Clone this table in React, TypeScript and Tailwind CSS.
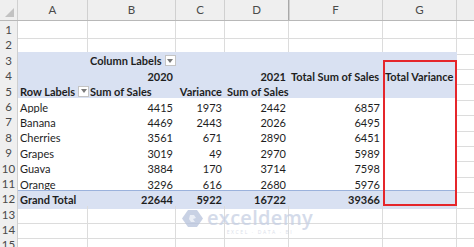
import React from 'react';

const cols = 'grid grid-cols-[18px_70px_88px_49px_64px_94px_74px_1fr]';
const font = { fontFamily: 'Lato, "Open Sans", sans-serif' };

type Row = { n: number; cells?: React.ReactNode[]; kind?: 'plain' | 'blue' | 'blueLast' | 'data' | 'total' };

const Drop = () => (
  <span className="ml-[3px] inline-flex h-[11px] w-[11px] items-center justify-center border border-[#c4c4c4] bg-white">
    <svg width="6" height="4" viewBox="0 0 6 4">
      <path d="M0 0h6L3 4z" fill="#7a7a7a" />
    </svg>
  </span>
);

const rows: Row[] = [
  { n: 1, kind: 'plain' },
  { n: 2, kind: 'plain' },
  { n: 3, kind: 'blue', cells: ['', <span className="flex items-center font-bold">Column Labels<Drop /></span>, '', '', '', ''] },
  { n: 4, kind: 'blue', cells: ['', <b className="ml-auto">2020</b>, '', <b className="ml-auto">2021</b>, <b>Total Sum of Sales</b>, <b>Total Variance</b>] },
  { n: 5, kind: 'blueLast', cells: [<span className="flex items-center font-bold">Row Labels<Drop /></span>, <b>Sum of Sales</b>, <b className="ml-auto">Variance</b>, <b className="whitespace-nowrap">Sum of Sales</b>, '', ''] },
  { n: 6, kind: 'data', cells: ['Apple', '4415', '1973', '2442', '6857', ''] },
  { n: 7, kind: 'data', cells: ['Banana', '4469', '2443', '2026', '6495', ''] },
  { n: 8, kind: 'data', cells: ['Cherries', '3561', '671', '2890', '6451', ''] },
  { n: 9, kind: 'data', cells: ['Grapes', '3019', '49', '2970', '5989', ''] },
  { n: 10, kind: 'data', cells: ['Guava', '3884', '170', '3714', '7598', ''] },
  { n: 11, kind: 'data', cells: ['Orange', '3296', '616', '2680', '5976', ''] },
  { n: 12, kind: 'total', cells: ['Grand Total', '22644', '5922', '16722', '39366', ''] },
  { n: 13, kind: 'plain' },
  { n: 14, kind: 'plain' },
  { n: 15, kind: 'plain' },
];

const letters = ['A', 'B', 'C', 'D', 'F', 'G'];

function rowClass(kind: Row['kind']) {
  if (kind === 'blue') return 'bg-[#d9e1f2]';
  if (kind === 'blueLast') return 'bg-[#d9e1f2] border-b border-[#9bb2dc]';
  if (kind === 'total') return 'bg-[#d9e1f2] border-t border-[#9bb2dc] font-bold';
  return 'bg-white';
}

export default function App() {
  return (
    <div className="relative h-[247px] w-[474px] overflow-hidden bg-white text-[11px] text-[#1e1e1e]" style={font}>
      {/* column header */}
      <div className={`${cols} h-[21px] border-b border-[#b8b8b8] bg-[#efefef] text-[11.5px] text-[#4a4a4a]`}>
        <div className="relative border-r border-[#d0d0d0]">
          <svg className="absolute bottom-[3px] right-[3px]" width="9" height="9" viewBox="0 0 9 9">
            <path d="M9 0v9H0z" fill="#c2c2c2" />
          </svg>
        </div>
        {letters.map((l, i) => (
          <div
            key={l}
            className={`flex items-center justify-center border-r ${i === 3 ? 'border-[#a8a8a8] shadow-[1px_0_0_#d0d0d0]' : 'border-[#d0d0d0]'}`}
          >
            {l}
          </div>
        ))}
        <div />
      </div>

      {rows.map((r) => {
        const pivot = r.kind !== 'plain';
        return (
          <div key={r.n} className={`${cols} h-[15.4px]`}>
            <div className="flex items-center justify-center border-r border-b border-[#cfcfcf] bg-[#efefef] text-[11.5px] text-[#4a4a4a]">
              {r.n}
            </div>
            {pivot ? (
              <div className={`col-span-6 grid grid-cols-[70px_88px_49px_64px_94px_74px] ${rowClass(r.kind)}`}>
                {r.cells!.map((c, i) => {
                  const num = r.kind === 'data' || r.kind === 'total';
                  const right = num && i > 0;
                  return (
                    <div
                      key={i}
                      className={`flex items-center overflow-visible whitespace-nowrap pl-[2px] pr-[3px] leading-none ${right ? 'justify-end' : ''}`}
                    >
                      {c}
                    </div>
                  );
                })}
              </div>
            ) : (
              letters.map((l) => <div key={l} className="border-r border-b border-[#dcdcdc]" />)
            )}
            <div className="border-b border-[#dcdcdc]" />
          </div>
        );
      })}

      {/* red highlight box */}
      <div className="absolute left-[383px] top-[60px] h-[146px] w-[74px] border-2 border-[#e5262b]" />

      {/* watermark */}
      <div className="pointer-events-none absolute left-[182px] top-[210px] flex items-start gap-[4px] opacity-75">
        <svg width="21" height="17" viewBox="0 0 21 17">
          <path d="M6 0h9l6 8.5-6 8.5H6L0 8.5z" fill="#b6c2dc" />
          <path d="M8 5h4l2 3-3 1 2 3H9l-2-3z" fill="#e4e9f3" />
        </svg>
        <div className="flex flex-col items-center">
          <span className="text-[20px] leading-[16px] font-semibold tracking-[0.3px] text-[#c6cfe3]" style={{ fontFamily: '"Open Sans", sans-serif' }}>
            exceldemy
          </span>
          <span className="mt-[4px] text-[5px] leading-[5px] tracking-[1.6px] text-[#cfd5e3]" style={{ fontFamily: '"Open Sans", sans-serif' }}>
            EXCEL · DATA · BI
          </span>
        </div>
      </div>
    </div>
  );
}
